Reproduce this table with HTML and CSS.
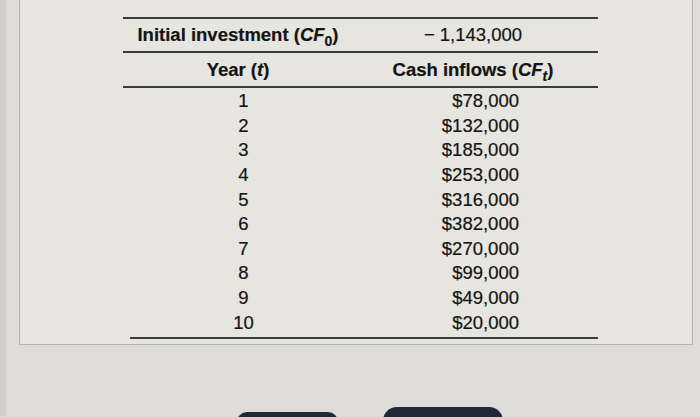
FILE: index.html
```html
<!DOCTYPE html>
<html>
<head>
<meta charset="utf-8">
<link rel="stylesheet" href="styles.css">
</head>
<body>
<div class="page">
  <div class="panel">
    <div class="cf-table">
      <div class="head-row first">
        <div class="cell left bold">Initial investment (<i>CF</i><sub>0</sub>)</div>
        <div class="cell right">&minus; 1,143,000</div>
      </div>
      <div class="head-row">
        <div class="cell left bold">Year (<i>t</i>)</div>
        <div class="cell right bold">Cash inflows (<i>CF<sub>t</sub></i>)</div>
      </div>
      <div class="body">
        <div class="row"><div class="cell left">1</div><div class="cell money">$78,000</div></div>
        <div class="row"><div class="cell left">2</div><div class="cell money">$132,000</div></div>
        <div class="row"><div class="cell left">3</div><div class="cell money">$185,000</div></div>
        <div class="row"><div class="cell left">4</div><div class="cell money">$253,000</div></div>
        <div class="row"><div class="cell left">5</div><div class="cell money">$316,000</div></div>
        <div class="row"><div class="cell left">6</div><div class="cell money">$382,000</div></div>
        <div class="row"><div class="cell left">7</div><div class="cell money">$270,000</div></div>
        <div class="row"><div class="cell left">8</div><div class="cell money">$99,000</div></div>
        <div class="row"><div class="cell left">9</div><div class="cell money">$49,000</div></div>
        <div class="row"><div class="cell left">10</div><div class="cell money">$20,000</div></div>
      </div>
    </div>
  </div>
  <div class="buttons">
    <div class="btn btn-a"></div>
    <div class="btn btn-b"></div>
  </div>
</div>
</body>
</html>
```

FILE: styles.css
```css
html, body {
  margin: 0;
  padding: 0;
}
body {
  width: 700px;
  height: 417px;
  overflow: hidden;
  background: #dcdbd6;
  font-family: "Liberation Sans", Arial, sans-serif;
  color: #141414;
}
.page {
  height: 417px;
  padding-left: 19px;
  box-sizing: border-box;
  background: linear-gradient(to right, #cfceca 0, #cfceca 6px, #dedcd8 6px);
}
.panel {
  margin-top: -1px;
  width: 674px;
  height: 346px;
  box-sizing: border-box;
  border: 1px solid #b3b2ad;
  background: #e6e5e0;
  padding-top: 17px;
  padding-left: 103px;
}
.cf-table {
  width: 475px;
  border-top: 2px solid #3c3c3c;
  font-size: 18.5px;
  line-height: 20px;
  -webkit-text-stroke: 0.2px #141414;
}
.head-row {
  display: grid;
  grid-template-columns: 230px 1fr;
  height: 33px;
  align-items: center;
  border-bottom: 2px solid #3c3c3c;
}
.head-row.first {
  height: 32px;
}
.cell.left {
  text-align: center;
}
.cell.right {
  text-align: center;
  padding-right: 5px;
}
.bold {
  font-weight: bold;
}
i {
  font-style: italic;
}
sub {
  font-size: 14px;
  line-height: 0;
  vertical-align: -5px;
}
.body {
  padding-top: 1px;
  padding-bottom: 2px;
  margin-left: 7px;
  width: 468px;
  border-bottom: 2px solid #3c3c3c;
}
.row {
  display: grid;
  grid-template-columns: 227px 1fr;
  height: 24.6px;
  align-items: center;
}
.cell.money {
  text-align: right;
  padding-right: 79px;
}
.buttons {
  display: flex;
  margin-top: 62px;
  padding-left: 218px;
  gap: 45px;
  align-items: flex-start;
}
.btn {
  background: #1f2a36;
  border-radius: 10px 10px 0 0;
}
.btn-a {
  width: 101px;
  height: 10px;
  margin-top: 5px;
}
.btn-b {
  width: 120px;
  height: 14px;
  border-radius: 14px 14px 0 0;
}
```
